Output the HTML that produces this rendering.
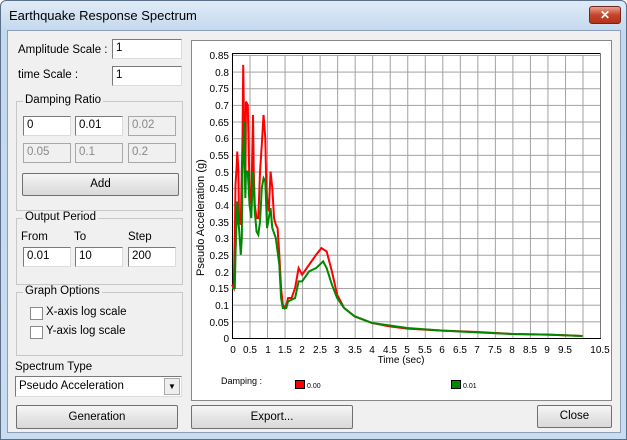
<!DOCTYPE html>
<html><head><style>
body{margin:0;width:627px;height:440px;overflow:hidden;background:#fff;font-family:"Liberation Sans",Arial,sans-serif;font-size:11.5px;}
.win{position:absolute;left:0;top:0;width:625px;height:438px;border:1px solid #5a6f88;border-radius:6px 6px 0 0;background:linear-gradient(#e0ebf7,#c4d8ee 30px,#c9dcf0);}
.title{position:absolute;left:8px;top:7px;font-size:13px;color:#000;}
.close{position:absolute;left:588px;top:5px;width:30px;height:16px;border:1px solid #6b2a20;border-radius:3px;background:linear-gradient(#e8a18f,#c6442a 50%,#b33219);color:#fff;font-weight:bold;text-align:center;line-height:16px;font-size:12px;}
.body{position:absolute;left:7px;top:30px;width:612px;height:401px;background:#f0f0f0;border:1px solid #8aa0ba;}
.a{position:absolute;}
.inp{position:absolute;background:#fff;border:1px solid #7a7a7a;border-right-color:#dcdcdc;border-bottom-color:#dcdcdc;height:20px;box-sizing:border-box;padding:2px 3px;font-size:11.5px;}
.dis{background:#f0f0f0;color:#888;border-color:#a8a8a8;}
.grp{position:absolute;border:1px solid #c8c8c8;box-sizing:border-box;}
.grp span{position:absolute;left:6px;top:-8px;background:#f0f0f0;padding:0 2px;}
.btn{position:absolute;border:1px solid #707070;border-radius:2px;background:linear-gradient(#f6f6f6,#e6e6e6 50%,#d9d9d9);box-sizing:border-box;text-align:center;font-size:11.5px;}
.cb{position:absolute;width:11px;height:11px;border:1px solid #8a8a8a;background:#fff;}
svg text{font-family:"Liberation Sans",Arial,sans-serif;}
</style></head><body>
<div class="win">
<div class="title">Earthquake Response Spectrum</div>
<div class="close">✕</div>
</div>
<div class="body"></div>
<div class="a" style="left:18px;top:44px">Amplitude Scale :</div>
<div class="inp" style="left:112px;top:39px;width:70px">1</div>
<div class="a" style="left:18px;top:69px">time Scale :</div>
<div class="inp" style="left:112px;top:66px;width:70px">1</div>
<div class="grp" style="left:16px;top:101px;width:167px;height:110px"><span>Damping Ratio</span></div>
<div class="inp" style="left:23px;top:116px;width:48px">0</div>
<div class="inp" style="left:75px;top:116px;width:48px">0.01</div>
<div class="inp dis" style="left:128px;top:116px;width:48px">0.02</div>
<div class="inp dis" style="left:23px;top:143px;width:48px">0.05</div>
<div class="inp dis" style="left:75px;top:143px;width:48px">0.1</div>
<div class="inp dis" style="left:128px;top:143px;width:48px">0.2</div>
<div class="btn" style="left:22px;top:173px;width:157px;height:23px;line-height:21px">Add</div>
<div class="grp" style="left:16px;top:218px;width:167px;height:67px"><span>Output Period</span></div>
<div class="a" style="left:21px;top:231px">From</div>
<div class="a" style="left:74px;top:231px">To</div>
<div class="a" style="left:128px;top:231px">Step</div>
<div class="inp" style="left:23px;top:247px;width:48px">0.01</div>
<div class="inp" style="left:75px;top:247px;width:48px">10</div>
<div class="inp" style="left:128px;top:247px;width:48px">200</div>
<div class="grp" style="left:16px;top:292px;width:167px;height:64px"><span>Graph Options</span></div>
<div class="cb" style="left:30px;top:307px"></div><div class="a" style="left:46px;top:306px">X-axis log scale</div>
<div class="cb" style="left:30px;top:326px"></div><div class="a" style="left:46px;top:325px">Y-axis log scale</div>
<div class="a" style="left:15px;top:361px">Spectrum Type</div>
<div class="inp" style="left:15px;top:376px;width:167px;height:21px;padding:3px 3px">Pseudo Acceleration</div>
<div class="a" style="left:164px;top:378px;width:16px;height:17px;background:#eee;border:1px solid #aaa;box-sizing:border-box;font-size:8px;text-align:center;line-height:16px">▼</div>
<div class="btn" style="left:16px;top:405px;width:162px;height:24px;line-height:22px">Generation</div>
<div class="btn" style="left:191px;top:405px;width:162px;height:24px;line-height:22px">Export...</div>
<div class="btn" style="left:537px;top:405px;width:75px;height:23px;line-height:21px">Close</div>

<svg class="a" style="left:0;top:0" width="627" height="440">
<defs>
<pattern id="g" x="232" y="338" width="17.525" height="16.65" patternUnits="userSpaceOnUse">
<path d="M0.5 0V16.65M0 0.5H17.525" stroke="#a0a0a0" stroke-width="1" fill="none"/>
</pattern>
</defs>
<rect x="191.5" y="40.5" width="420" height="360" fill="#fff" stroke="#888"/>
<rect x="232" y="55" width="368" height="283" fill="url(#g)"/>
<line x1="232" y1="53.5" x2="601" y2="53.5" stroke="#000"/>
<line x1="600.5" y1="53" x2="600.5" y2="338" stroke="#777"/>
<line x1="232" y1="338.5" x2="601" y2="338.5" stroke="#000"/>
<line x1="232.5" y1="53" x2="232.5" y2="339" stroke="#000"/>
<g font-size="10" text-anchor="end" fill="#000">
<text x="229" y="59">0.85</text><text x="229" y="76">0.8</text><text x="229" y="92">0.75</text><text x="229" y="109">0.7</text><text x="229" y="126">0.65</text><text x="229" y="142">0.6</text><text x="229" y="159">0.55</text><text x="229" y="176">0.5</text><text x="229" y="192">0.45</text><text x="229" y="209">0.4</text><text x="229" y="226">0.35</text><text x="229" y="242">0.3</text><text x="229" y="259">0.25</text><text x="229" y="276">0.2</text><text x="229" y="292">0.15</text><text x="229" y="309">0.1</text><text x="229" y="326">0.05</text><text x="229" y="342">0</text>
</g>
<g font-size="10" text-anchor="middle" fill="#000">
<text x="233" y="353">0</text><text x="250" y="353">0.5</text><text x="268" y="353">1</text><text x="285" y="353">1.5</text><text x="302" y="353">2</text><text x="320" y="353">2.5</text><text x="337" y="353">3</text><text x="355" y="353">3.5</text><text x="372" y="353">4</text><text x="390" y="353">4.5</text><text x="407" y="353">5</text><text x="425" y="353">5.5</text><text x="442" y="353">6</text><text x="460" y="353">6.5</text><text x="477" y="353">7</text><text x="495" y="353">7.5</text><text x="512" y="353">8</text><text x="530" y="353">8.5</text><text x="547" y="353">9</text><text x="565" y="353">9.5</text><text x="600" y="353">10.5</text>
<text x="401" y="363">Time (sec)</text>
</g>
<text transform="translate(204,276) rotate(-90)" font-size="11">Pseudo Acceleration (g)</text>
<text x="221" y="384" font-size="9">Damping :</text>
<rect x="295.5" y="380.5" width="9" height="8" fill="#f00" stroke="#000"/><text x="307" y="388" font-size="7">0.00</text>
<rect x="451.5" y="380.5" width="9" height="8" fill="#080" stroke="#000"/><text x="463" y="388" font-size="7">0.01</text>
<g transform="translate(232,338) scale(35.05,-333)" fill="none" stroke-width="2">
<polyline vector-effect="non-scaling-stroke" stroke="#f00" points="0,0.16 0.05,0.15 0.08,0.3 0.1,0.46 0.13,0.51 0.15,0.56 0.18,0.51 0.2,0.36 0.25,0.34 0.3,0.6 0.32,0.82 0.35,0.6 0.38,0.45 0.4,0.71 0.45,0.7 0.5,0.45 0.55,0.4 0.6,0.67 0.62,0.5 0.65,0.4 0.7,0.36 0.75,0.36 0.8,0.5 0.85,0.58 0.9,0.67 0.95,0.6 0.98,0.45 1,0.42 1.05,0.38 1.1,0.5 1.15,0.45 1.2,0.36 1.25,0.34 1.3,0.33 1.35,0.25 1.4,0.15 1.45,0.1 1.5,0.09 1.55,0.1 1.6,0.12 1.7,0.12 1.8,0.15 1.9,0.21 2,0.19 2.2,0.22 2.4,0.25 2.55,0.27 2.7,0.26 2.85,0.2 3,0.13 3.2,0.09 3.5,0.065 4,0.045 4.5,0.035 5,0.028 6,0.022 7,0.018 8,0.012 9,0.01 9.6,0.008 10,0.006"/>
<polyline vector-effect="non-scaling-stroke" stroke="#080" points="0,0.15 0.08,0.15 0.1,0.25 0.13,0.35 0.15,0.41 0.18,0.35 0.2,0.33 0.25,0.25 0.28,0.3 0.3,0.5 0.35,0.65 0.38,0.42 0.4,0.5 0.45,0.5 0.5,0.4 0.55,0.36 0.6,0.5 0.65,0.38 0.7,0.32 0.75,0.31 0.8,0.35 0.85,0.45 0.9,0.48 0.95,0.47 1,0.33 1.1,0.39 1.15,0.33 1.25,0.3 1.35,0.22 1.4,0.12 1.45,0.09 1.55,0.09 1.6,0.11 1.8,0.12 1.9,0.17 2,0.17 2.2,0.2 2.4,0.21 2.6,0.23 2.7,0.21 2.85,0.16 3,0.12 3.2,0.09 3.5,0.065 4,0.045 5,0.03 6,0.022 7,0.017 8,0.012 9,0.01 10,0.006"/>
</g>
</svg>
</body></html>
